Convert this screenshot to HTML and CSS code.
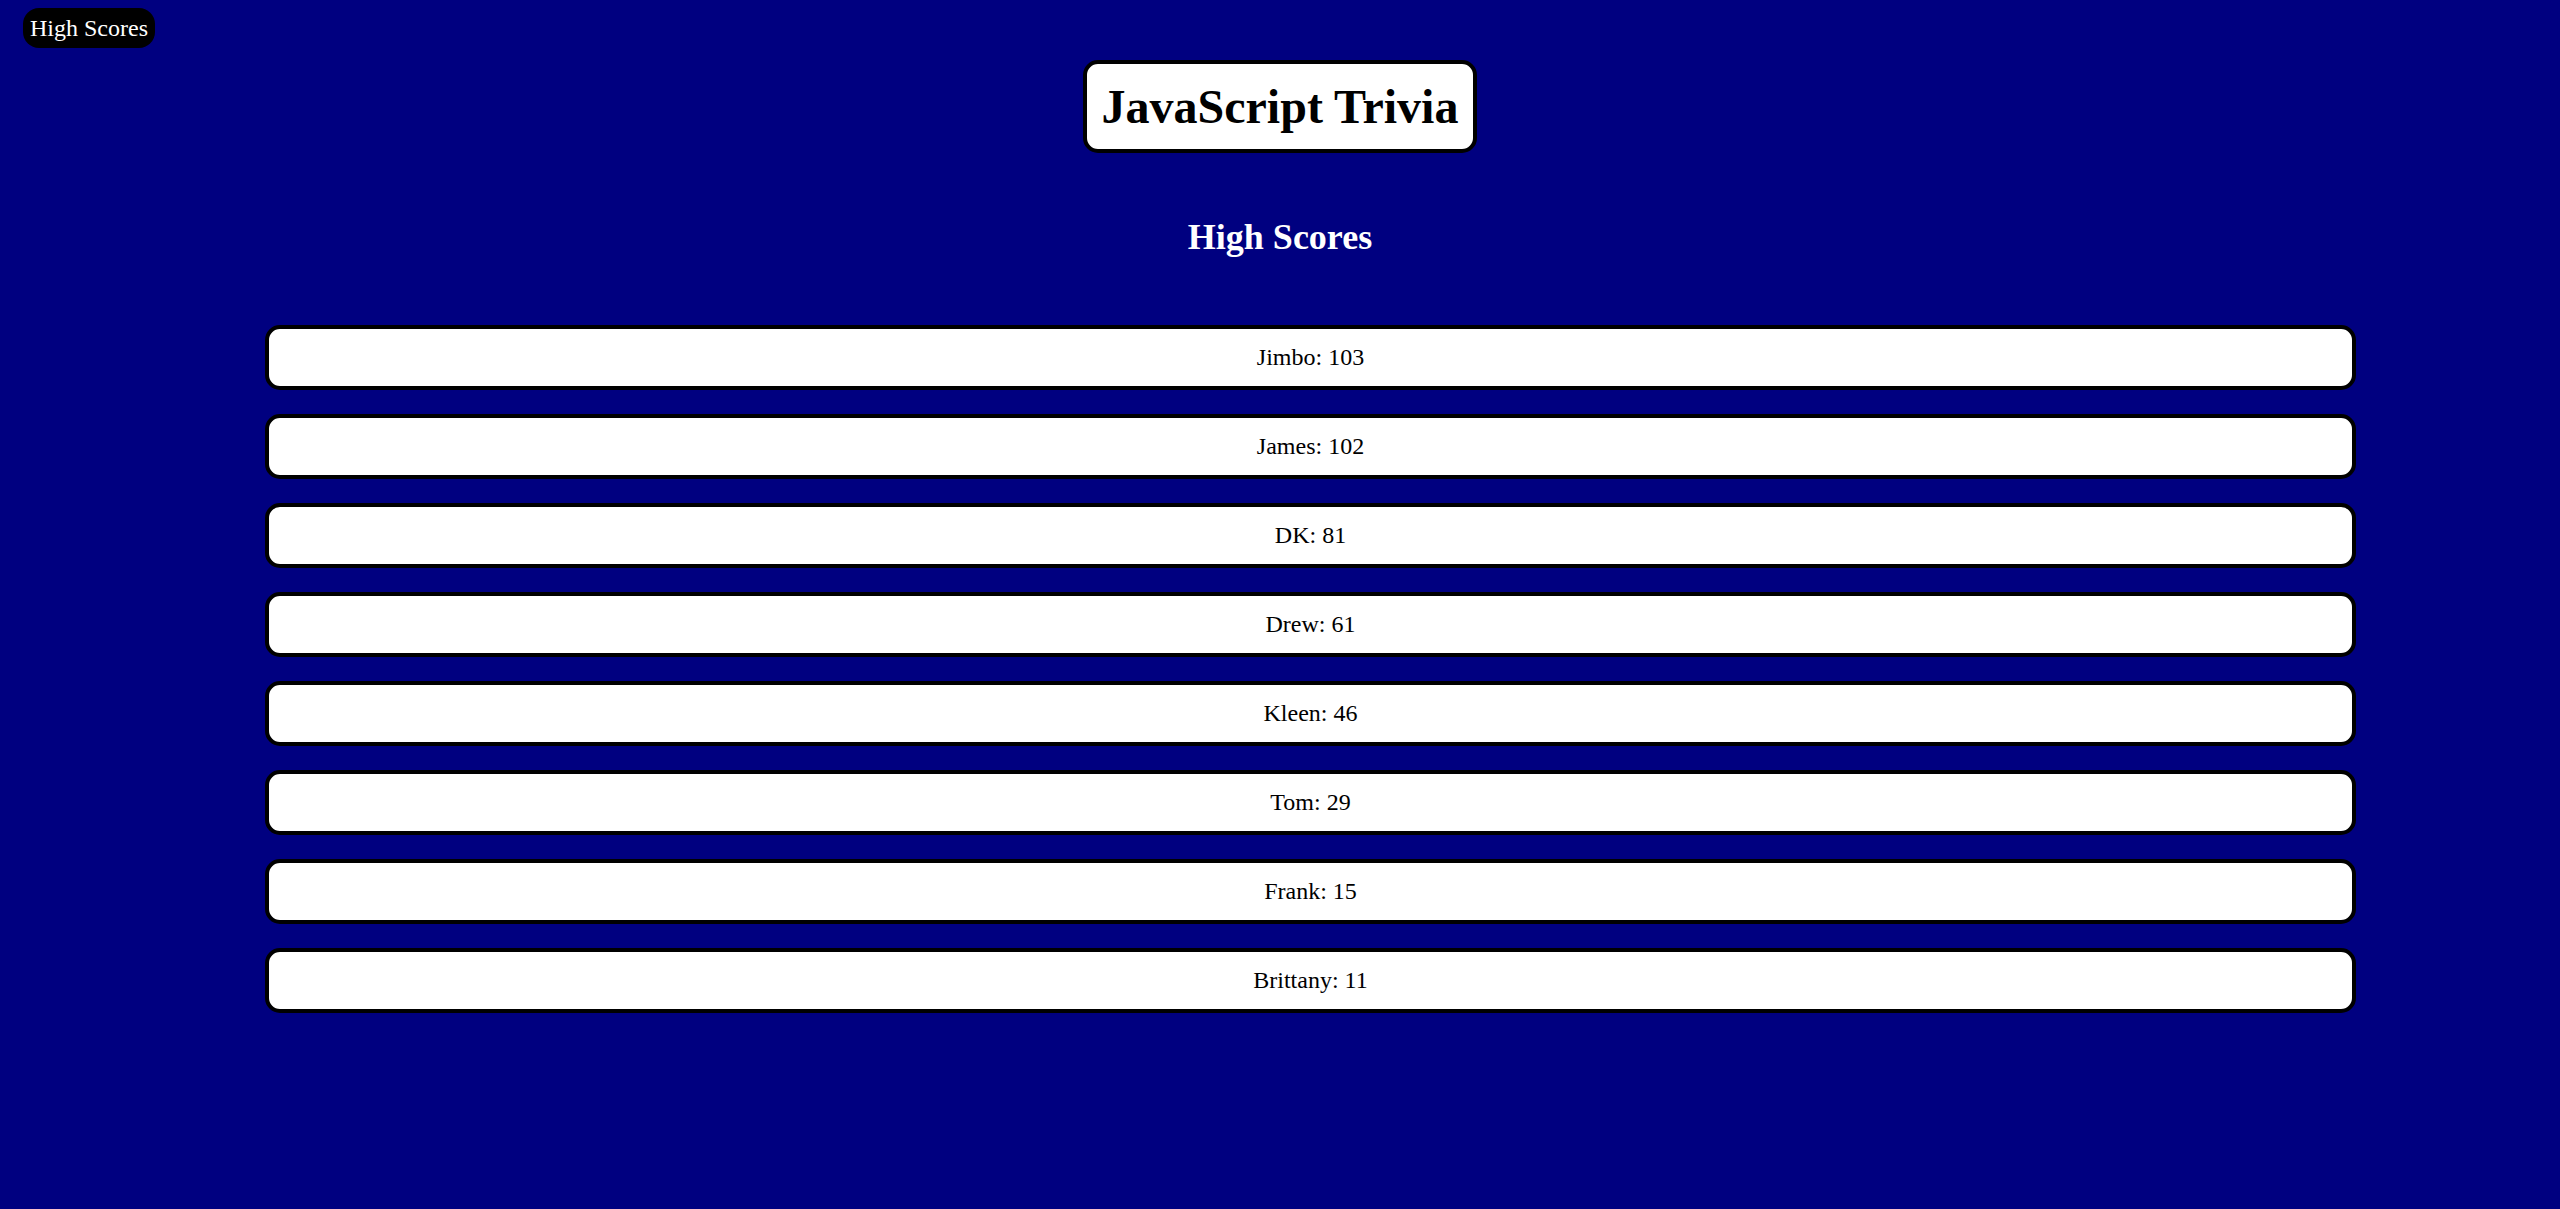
FILE: index.html
```html
<!DOCTYPE html>
<html lang="en">
<head>
    <meta charset="UTF-8">
    <meta name="viewport" content="width=device-width, initial-scale=1.0">
    <title>JavaScript Trivia - High Scores</title>
    <link rel="stylesheet" href="styles.css">
</head>
<body>
    <div id="top-bar">
        <a href="#" id="scores-link">High Scores</a>
    </div>
    <header id="title-wrap">
        <h1 id="title">JavaScript Trivia</h1>
    </header>
    <h2 id="scores-heading">High Scores</h2>
    <ul id="score-list">
        <li class="score-item">Jimbo: 103</li>
        <li class="score-item">James: 102</li>
        <li class="score-item">DK: 81</li>
        <li class="score-item">Drew: 61</li>
        <li class="score-item">Kleen: 46</li>
        <li class="score-item">Tom: 29</li>
        <li class="score-item">Frank: 15</li>
        <li class="score-item">Brittany: 11</li>
    </ul>
</body>
</html>
```

FILE: styles.css
```css
body {
    font-family: 'Liberation Serif', 'Times New Roman', serif;
    background-color: #000080;
    margin: 0;
}
#top-bar {
    display: flex;
    padding: 8px 0 0 23px;
}
#scores-link {
    background-color: #000;
    color: white;
    font-size: 24px;
    line-height: 28px;
    padding: 6px 7px;
    border-radius: 16px;
    text-decoration: none;
}
#title-wrap {
    display: flex;
    justify-content: center;
    margin-top: 12px;
}
#title {
    margin: 0;
    font-size: 48px;
    line-height: 55px;
    padding: 15px;
    background-color: white;
    border: 4px solid #000;
    border-radius: 15px;
}
#scores-heading {
    margin: 64px 0 0;
    color: white;
    font-size: 36px;
    line-height: 41px;
    text-align: center;
}
#score-list {
    list-style-type: none;
    margin: 67px 204px 0 265px;
    padding: 0;
    display: flex;
    flex-direction: column;
    gap: 24px;
}
.score-item {
    background-color: white;
    border: 4px solid #000;
    border-radius: 15px;
    font-size: 24px;
    line-height: 57px;
    text-align: center;
}
```
